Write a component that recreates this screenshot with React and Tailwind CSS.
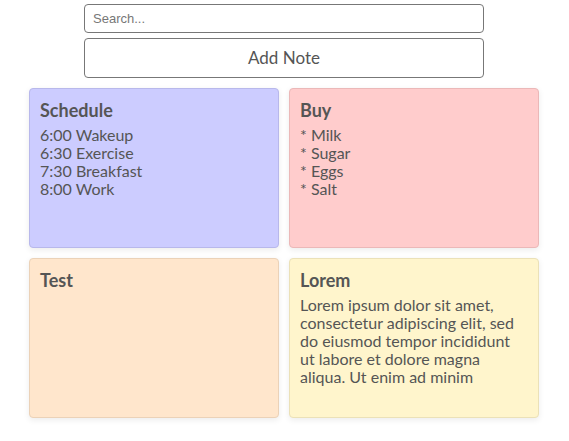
import React, { useState } from 'react';

const notes = [
  { title: 'Schedule', body: '6:00 Wakeup\n6:30 Exercise\n7:30 Breakfast\n8:00 Work', color: 'bg-[#ccccff] border-[#b8b8eb]' },
  { title: 'Buy', body: '* Milk\n* Sugar\n* Eggs\n* Salt', color: 'bg-[#ffcccc] border-[#ebb8b8]' },
  { title: 'Test', body: '', color: 'bg-[#ffe6cc] border-[#ebd2b8]' },
  {
    title: 'Lorem',
    body: 'Lorem ipsum dolor sit amet, consectetur adipiscing elit, sed do eiusmod tempor incididunt ut labore et dolore magna aliqua. Ut enim ad minim',
    color: 'bg-[#fff5cc] border-[#ebe1b8]',
  },
];

const App = () => {
  const [query, setQuery] = useState('');
  return (
    <div className="min-h-screen bg-white font-['Lato',sans-serif] text-[#555]">
      <div className="ml-[84px] flex w-[400px] flex-col pt-1">
        <input
          value={query}
          onChange={(e) => setQuery(e.target.value)}
          placeholder="Search..."
          className="h-[29px] w-full rounded border border-[#777] px-2 font-['Liberation_Sans',sans-serif] text-[13px] placeholder:text-[#777] outline-none"
        />
        <button className="mt-[5px] h-[40px] w-full rounded border border-[#777] bg-white text-[17px] text-[#555]">
          Add Note
        </button>
      </div>

      {/* notes */}
      <div className="ml-[29px] mt-[10px] grid w-[510px] grid-cols-2 gap-[10px]">
        {notes.map((n) => (
          <div key={n.title} className={`h-[160px] rounded border p-[10px] shadow-[0_2px_6px_rgba(0,0,0,0.08)] ${n.color}`}>
            <h2 className="text-lg font-bold leading-[22px]">{n.title}</h2>
            <p className="mt-[5px] whitespace-pre-line text-base leading-[18px]">{n.body}</p>
          </div>
        ))}
      </div>
    </div>
  );
};

export default App;
